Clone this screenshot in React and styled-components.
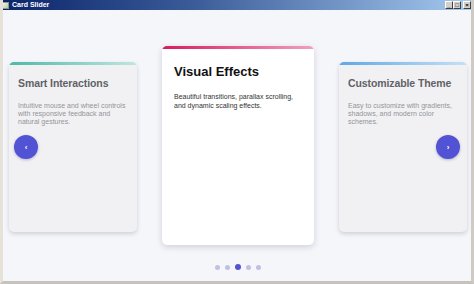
import * as React from 'react';
import styled, { createGlobalStyle } from 'styled-components';

const GlobalStyle = createGlobalStyle`
    html, body {
        margin: 0;
        padding: 0;
        background: #d4d0c8;
    }
    body {
        font-family: "Liberation Sans", Arial, sans-serif;
    }
`

const Window = styled.div`
    width: 474px;
    height: 284px;
    display: flex;
    flex-direction: column;
    background: #d4d0c8;
    box-sizing: border-box;
    border-left: 3px solid #e6e2da;
    border-right: 3px solid #cfcbc4;
    border-bottom: 3px solid #c6c3bd;
    overflow: hidden;
`

const TitleBar = styled.div`
    height: 10px;
    margin: 0 -3px;
    display: flex;
    align-items: center;
    padding: 0 3px 0 2px;
    background: linear-gradient(to right, #0a246a, #3a5a98 40%, #a6caf0);
    color: #fff;
    font-size: 7px;
    font-weight: bold;
`

const AppIcon = styled.span`
    width: 7px;
    height: 7px;
    margin-right: 3px;
    background: linear-gradient(135deg, #f4f4f4, #b0c8a0);
    border: 1px solid #8a9a80;
    box-sizing: border-box;
`

const Caption = styled.span`
    flex: 1;
    line-height: 10px;
`

const WinButtons = styled.div`
    display: flex;
`

const WinButton = styled.span`
    width: 8px;
    height: 8px;
    box-sizing: border-box;
    background: #d4d0c8;
    border: 1px solid;
    border-color: #fff #404040 #404040 #fff;
    color: #000;
    font-size: 6px;
    line-height: 6px;
    text-align: center;
    margin-left: ${p => (p.gap ? '2px' : '0')};
`

const Content = styled.div`
    flex: 1;
    position: relative;
    background: #f5f6fa;
    display: flex;
    flex-direction: column;
    align-items: center;
`

const Track = styled.div`
    display: flex;
    align-items: flex-start;
    gap: 25px;
    margin-top: 36px;
    margin-left: 2px;
`

const Card = styled.div`
    width: ${p => (p.active ? 152 : 128)}px;
    height: ${p => (p.active ? 199 : 170)}px;
    margin-top: ${p => (p.active ? 0 : 16)}px;
    box-sizing: border-box;
    border-radius: 5px;
    background: ${p => (p.active ? '#ffffff' : '#f1f1f4')};
    box-shadow: ${p => (p.active
        ? '0 2px 6px rgba(40, 40, 80, 0.18)'
        : '0 2px 4px rgba(40, 40, 60, 0.18)')};
    overflow: hidden;
    display: flex;
    flex-direction: column;
`

const Accent = styled.div`
    height: 3px;
    background: ${p => p.gradient};
`

const CardBody = styled.div`
    padding: ${p => (p.active ? '15px 12px' : '12px 9px')};
`

const Title = styled.h2`
    margin: 0;
    font-size: ${p => (p.active ? 13 : 10.5)}px;
    font-weight: bold;
    color: ${p => (p.active ? '#111' : '#616166')};
    letter-spacing: ${p => (p.active ? 0 : -0.1)}px;
`

const Desc = styled.p`
    margin: ${p => (p.active ? '13px 0 0' : '13px 0 0')};
    font-size: 7px;
    line-height: ${p => (p.active ? 9 : 8)}px;
    color: ${p => (p.active ? '#333' : '#939399')};
`

const NavButton = styled.button`
    position: absolute;
    top: 125px;
    ${p => (p.side === 'left' ? 'left: 11px;' : 'right: 11px;')}
    width: 24px;
    height: 24px;
    border: none;
    border-radius: 50%;
    background: #5252d4;
    color: #fff;
    font-size: 8px;
    font-weight: bold;
    padding: 0;
    display: flex;
    align-items: center;
    justify-content: center;
    box-shadow: 0 1px 3px rgba(40, 40, 120, 0.3);
`

const Dots = styled.div`
    position: absolute;
    left: 0;
    right: 0;
    bottom: 11px;
    display: flex;
    justify-content: center;
    align-items: center;
    gap: 5px;
    margin-left: 2px;
`

const Dot = styled.span`
    width: ${p => (p.active ? 6 : 5)}px;
    height: ${p => (p.active ? 6 : 5)}px;
    border-radius: 50%;
    background: ${p => (p.active ? '#5353d0' : '#bfc0e2')};
`

const cards = [
    {
        title: 'Smart Interactions',
        desc: 'Intuitive mouse and wheel controls with responsive feedback and natural gestures.',
        gradient: 'linear-gradient(to right, #4fb8a8, #bfe6df)',
    },
    {
        title: 'Visual Effects',
        desc: 'Beautiful transitions, parallax scrolling, and dynamic scaling effects.',
        gradient: 'linear-gradient(to right, #d81b5e, #f0a0bd)',
        active: true,
    },
    {
        title: 'Customizable Theme',
        desc: 'Easy to customize with gradients, shadows, and modern color schemes.',
        gradient: 'linear-gradient(to right, #5ea8e6, #c6e0f6)',
    },
];

const App = () => {
    return (
        <>
            <GlobalStyle />
            <Window>
                <TitleBar>
                    <AppIcon />
                    <Caption>Card Slider</Caption>
                    <WinButtons>
                        <WinButton>_</WinButton>
                        <WinButton>□</WinButton>
                        <WinButton gap>×</WinButton>
                    </WinButtons>
                </TitleBar>
                <Content>
                    <Track>
                        {cards.map(c => (
                            <Card key={c.title} active={c.active}>
                                <Accent gradient={c.gradient} />
                                <CardBody active={c.active}>
                                    <Title active={c.active}>{c.title}</Title>
                                    <Desc active={c.active}>{c.desc}</Desc>
                                </CardBody>
                            </Card>
                        ))}
                    </Track>
                    <NavButton side="left">‹</NavButton>
                    <NavButton side="right">›</NavButton>
                    <Dots>
                        <Dot />
                        <Dot />
                        <Dot active />
                        <Dot />
                        <Dot />
                    </Dots>
                </Content>
            </Window>
        </>
    );
};

export default App;
